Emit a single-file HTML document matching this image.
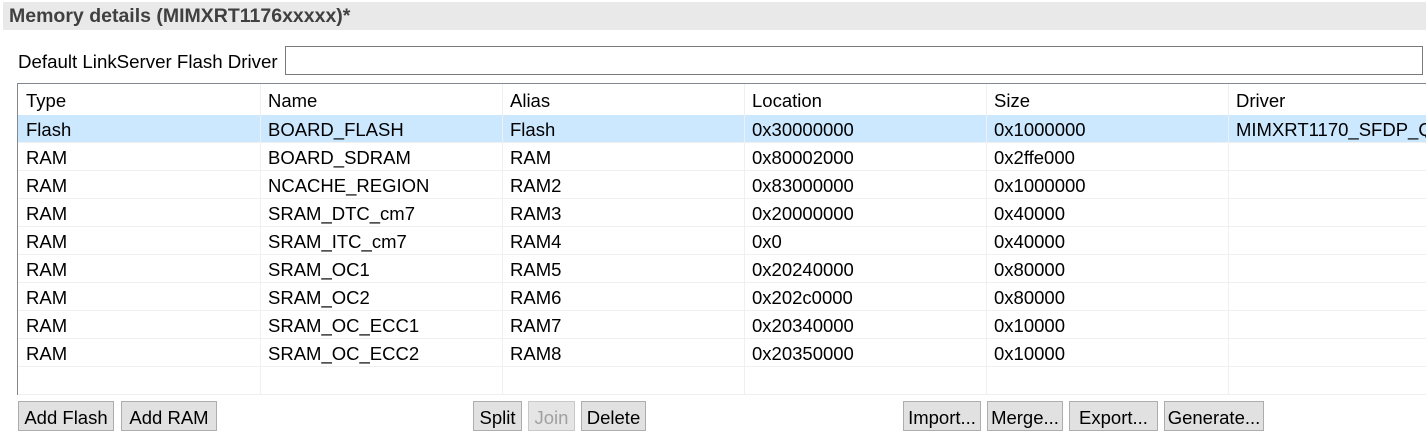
<!DOCTYPE html><html><head><style>
body{margin:0;width:1426px;height:429px;background:#fff;font-family:"Liberation Sans",sans-serif;position:relative;overflow:hidden;color:#000}
.abs{position:absolute}
.hdr{left:3px;top:2px;width:1423px;height:28px;background:#e9e9e9;font-weight:bold;font-size:19.5px;color:#404040;line-height:28px;padding-left:6px;box-sizing:border-box}
.t{font-size:18.7px;white-space:nowrap}
.btn{position:absolute;top:401px;height:30px;background:#e1e1e1;border:1px solid #adadad;box-sizing:border-box;font-size:18.5px;line-height:31px;text-align:center;white-space:nowrap;overflow:hidden}
.row{position:absolute;left:18px;width:1408px;height:28px;border-bottom:1px solid #f0f0f0;box-sizing:border-box;overflow:hidden}
.c{position:absolute;top:0;font-size:18.5px;line-height:30px;white-space:nowrap}
.vl{position:absolute;top:84px;width:1px;height:310px;background:#eef0f4}
</style></head><body>
<div class="abs hdr">Memory details (MIMXRT1176xxxxx)*</div>
<div class="abs t" style="left:18px;top:49px;line-height:25px">Default LinkServer Flash Driver</div>
<div class="abs" style="left:285px;top:46px;width:1138px;height:29px;border:1px solid #7a7a7a;box-sizing:border-box"></div>
<div class="abs" style="left:17px;top:83px;width:1409px;height:312px;border:1px solid #828790;border-right:none;box-sizing:border-box"></div>
<div class="abs" style="left:18px;top:115px;width:1408px;height:28px;background:#cce8ff"></div>
<div class="vl" style="left:260px"></div><div class="vl" style="left:502px"></div><div class="vl" style="left:744px"></div><div class="vl" style="left:986px"></div><div class="vl" style="left:1228px"></div>
<div id="rows"></div>
<script>
var d=[["Type","Name","Alias","Location","Size","Driver"],
["Flash","BOARD_FLASH","Flash","0x30000000","0x1000000","MIMXRT1170_SFDP_QSPI.cfx"],
["RAM","BOARD_SDRAM","RAM","0x80002000","0x2ffe000",""],
["RAM","NCACHE_REGION","RAM2","0x83000000","0x1000000",""],
["RAM","SRAM_DTC_cm7","RAM3","0x20000000","0x40000",""],
["RAM","SRAM_ITC_cm7","RAM4","0x0","0x40000",""],
["RAM","SRAM_OC1","RAM5","0x20240000","0x80000",""],
["RAM","SRAM_OC2","RAM6","0x202c0000","0x80000",""],
["RAM","SRAM_OC_ECC1","RAM7","0x20340000","0x10000",""],
["RAM","SRAM_OC_ECC2","RAM8","0x20350000","0x10000",""],
["","","","","",""]];
var xs=[8,250,492,734,976,1218],h="";
d.forEach(function(r,i){var top=i==0?86:115+(i-1)*28;h+='<div class="row" style="top:'+top+'px;'+(i==0?'border:none':'')+'">';r.forEach(function(c,j){h+='<div class="c" style="left:'+xs[j]+'px">'+c+'</div>'});h+='</div>'});
document.getElementById('rows').outerHTML=h;
</script>
<div class="btn" style="left:18px;width:96px">Add Flash</div>
<div class="btn" style="left:121px;width:96px">Add RAM</div>
<div class="btn" style="left:473px;width:49px">Split</div>
<div class="btn" style="left:528px;width:47px;color:#a0a0a0;background:#e5e5e5;border-color:#c8c8c8">Join</div>
<div class="btn" style="left:581px;width:65px">Delete</div>
<div class="btn" style="left:903px;width:78px">Import...</div>
<div class="btn" style="left:987px;width:76px">Merge...</div>
<div class="btn" style="left:1069px;width:89px">Export...</div>
<div class="btn" style="left:1164px;width:100px">Generate...</div>
</body></html>
